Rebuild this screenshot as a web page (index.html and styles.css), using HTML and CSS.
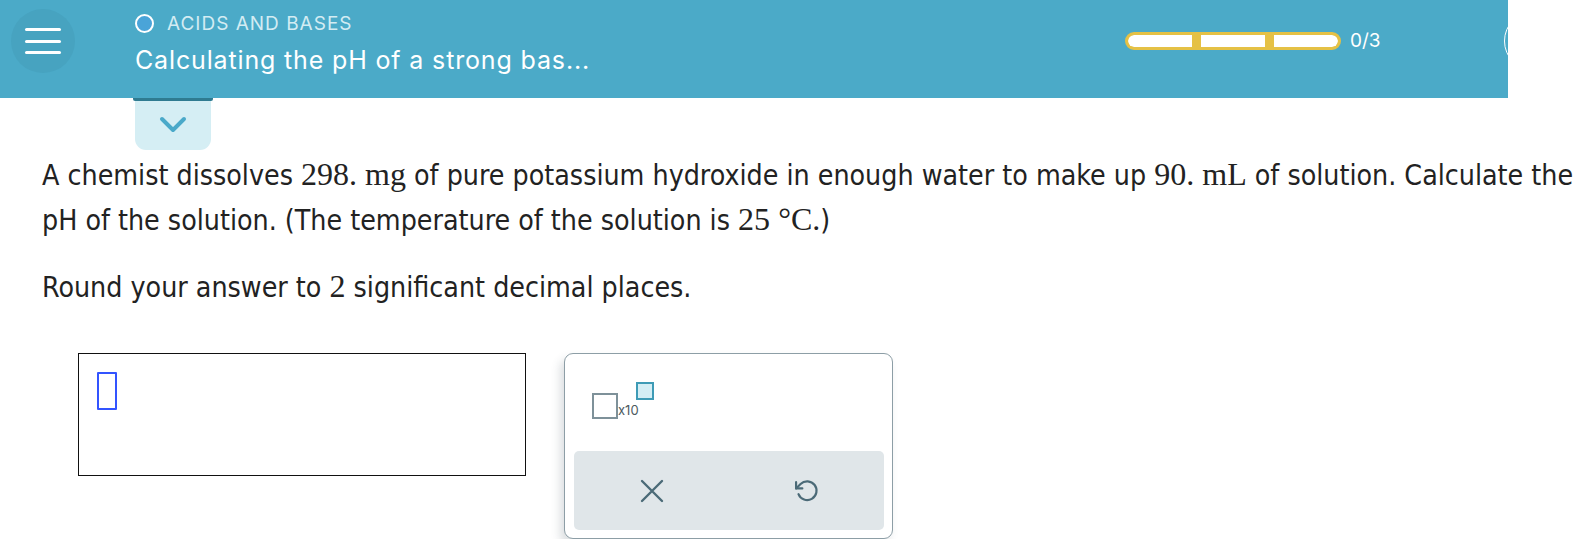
FILE: index.html
```html
<!DOCTYPE html>
<html>
<head>
<meta charset="utf-8">
<link rel="stylesheet" href="styles.css">
</head>
<body>
<header class="topbar">
  <div class="menu-btn">
    <span class="bar"></span><span class="bar"></span><span class="bar"></span>
  </div>
  <div class="titles">
    <div class="topic"><span class="dot"></span><span>ACIDS AND BASES</span></div>
    <div class="title">Calculating the pH of a strong bas...</div>
  </div>
  <div class="progress">
    <div class="track">
      <span class="seg"></span><span class="seg"></span><span class="seg"></span>
    </div>
    <span class="count">0/3</span>
  </div>
  <div class="avatar"></div>
</header>
<div class="tab-wrap">
  <div class="tab-strip"></div>
  <div class="tab">
    <svg width="28" height="17" viewBox="0 0 28 17"><path d="M3 3 L14 14 L25 3" fill="none" stroke="#4aa9c9" stroke-width="4" stroke-linecap="round" stroke-linejoin="round"/></svg>
  </div>
</div>
<main class="question">
  <p class="q first">A chemist dissolves <span class="m">298.</span> <span class="m">mg</span> of pure potassium hydroxide in enough water to make up <span class="m">90.</span> <span class="m">mL</span> of solution. Calculate the pH of the solution. (The temperature of the solution is <span class="m">25</span> <span class="m">°C</span><span class="m">.</span>)</p>
  <p class="q">Round your answer to <span class="m">2</span> significant decimal places.</p>
  <div class="answer-row">
    <div class="answer-box"><span class="cursor"></span></div>
    <div class="panel">
      <div class="tools">
        <div class="sci">
          <span class="sq-big"></span><span class="x10">x10</span><span class="sq-small"></span>
        </div>
      </div>
      <div class="actions">
        <div class="act">
          <svg width="24" height="24" viewBox="0 0 24 24"><path d="M2 2 L22 22 M22 2 L2 22" stroke="#4b6a77" stroke-width="2.4" stroke-linecap="round" fill="none"/></svg>
        </div>
        <div class="act">
          <svg width="25" height="25" viewBox="0 0 24 24"><polyline points="2 4 2 10 8 10" fill="none" stroke="#4b6a77" stroke-width="2.1" stroke-linecap="round" stroke-linejoin="round"/><path d="M4.3 15.5 A9 9 0 1 0 6.3 5.8 L2 10" fill="none" stroke="#4b6a77" stroke-width="2.1" stroke-linecap="round" stroke-linejoin="round"/></svg>
        </div>
      </div>
    </div>
  </div>
</main>
</body>
</html>
```

FILE: styles.css
```css
* { box-sizing: border-box; }
body { margin: 0; background: #fff; }

.topbar {
  width: 1508px;
  height: 98px;
  background: #4baac8;
  display: flex;
  align-items: flex-start;
  overflow: hidden;
}
.menu-btn {
  flex: none;
  width: 64px; height: 64px;
  margin: 9px 0 0 11px;
  border-radius: 50%;
  background: #47a3c0;
  display: flex; flex-direction: column; align-items: center; justify-content: center;
  gap: 8.5px;
}
.bar { display: block; width: 36px; height: 3px; background: #fff; border-radius: 2px; }

.titles { flex: none; width: 990px; margin-left: 60px; padding-top: 12px; font-family: Inter, "Open Sans", sans-serif; }
.topic { display: flex; align-items: center; gap: 13px; color: #d3ecf3; font-size: 19px; letter-spacing: 1px; height: 22px; }
.dot { width: 19px; height: 19px; border-radius: 50%; border: 2px solid #fff; background: #4aa4d8; }
.title { color: #fff; font-size: 25px; letter-spacing: 0.85px; margin-top: 11px; line-height: 30px; }

.progress { flex: none; display: flex; align-items: center; gap: 9px; margin-top: 29px; font-family: Inter, sans-serif; }
.track {
  width: 216px; height: 18px;
  border: 3px solid #e5c145; background: #e5c145; border-radius: 9px;
  display: flex; gap: 9px; overflow: hidden;
}
.seg { flex: 1; background: #fff; }
.seg:first-child { border-radius: 6px 0 0 6px; }
.seg:last-child { border-radius: 0 6px 6px 0; }
.count { color: #fff; font-size: 19px; }

.avatar {
  flex: none;
  width: 60px; height: 60px;
  margin: 11px 0 0 123px;
  border-radius: 50%;
  border: 1.5px solid #fff;
}

.tab-wrap { display: flex; flex-direction: column; }
.tab-strip { width: 80px; height: 3px; margin-left: 133px; background: #2f7b91; border-radius: 0 0 2px 2px; }
.tab {
  width: 76px; height: 49px; margin-left: 135px;
  background: #d5eef4; border-radius: 0 0 11px 11px;
  display: flex; justify-content: center; padding-top: 15px;
}

.question { padding-left: 42px; padding-top: 3px; }
.q {
  margin: 0;
  font-family: "DejaVu Sans Condensed", "DejaVu Sans", sans-serif;
  font-size: 28.3px;
  line-height: 45px;
  color: #222;
  width: 1540px;
}
.q.first { margin-bottom: 22px; }
.m { font-family: "Liberation Serif", "Times New Roman", serif; font-size: 32px; line-height: 1; }

.answer-row { display: flex; align-items: flex-start; gap: 38px; margin-top: 43px; margin-left: 36px; }
.answer-box {
  flex: none;
  width: 448px; height: 123px;
  border: 1px solid #111;
  padding: 18px 0 0 18px;
}
.cursor { display: block; width: 20px; height: 38px; border: 2px solid #3354ff; border-radius: 1px; }

.panel {
  flex: none;
  width: 329px; height: 186px;
  border: 1px solid #8d9ea6;
  border-radius: 9px;
  box-shadow: -4px 6px 10px rgba(60, 80, 90, 0.18);
  padding: 0 8px 8px 9px;
  display: flex; flex-direction: column;
  background: #fff;
}
.tools { flex: 1; padding: 28px 0 0 18px; }
.sci { display: flex; align-items: flex-end; position: relative; height: 37px; }
.sq-big { width: 26px; height: 26px; border: 2.5px solid #7e9199; }
.x10 { font-family: Inter, sans-serif; font-size: 13px; color: #4d5a60; line-height: 14px; margin-bottom: 2px; }
.sq-small { position: absolute; left: 44px; top: 0; width: 18px; height: 18px; border: 2.5px solid #3e9bb6; background: #d4eef5; }

.actions {
  height: 79px;
  background: #e0e6e9;
  border-radius: 5px;
  display: flex;
}
.act { flex: 1; display: flex; align-items: center; justify-content: center; }
```
